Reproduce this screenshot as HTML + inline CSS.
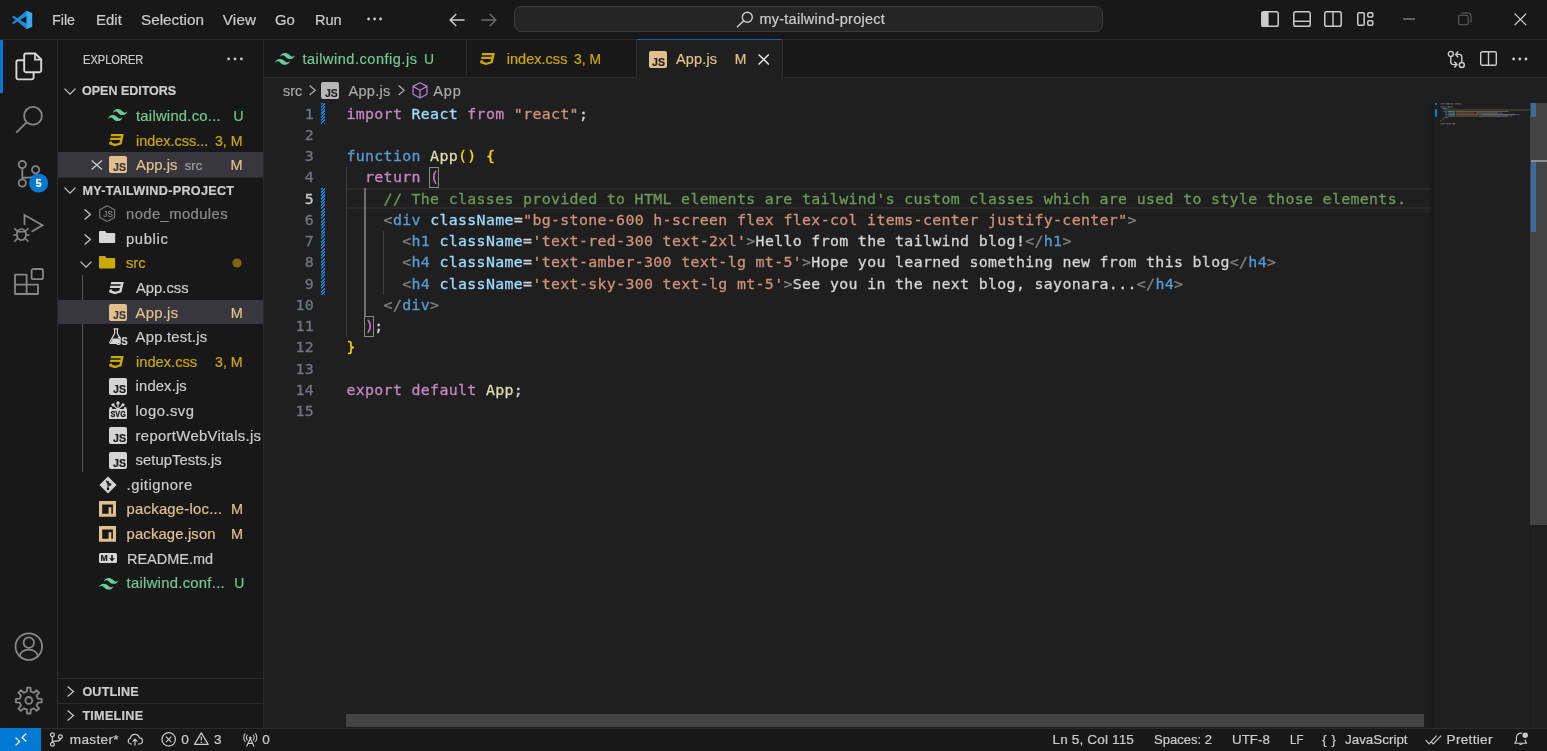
<!DOCTYPE html>
<html lang="en">
<head>
<meta charset="utf-8">
<title>App.js - my-tailwind-project - Visual Studio Code</title>
<style>
*{box-sizing:border-box;margin:0;padding:0}
html,body{width:1547px;height:751px;overflow:hidden;background:#181818}
body{font-family:"Liberation Sans",sans-serif;color:#cccccc;position:relative;font-size:14.5px}
#w{position:absolute;left:0;top:0;width:1547px;height:751px;will-change:transform}
.a{position:absolute}
.t{position:absolute;white-space:pre;line-height:1;-webkit-text-stroke:0.2px}
svg{position:absolute;overflow:visible}
.c{-webkit-text-stroke:0.3px;position:absolute;left:346.4px;white-space:pre;font-family:"DejaVu Sans Mono","Liberation Mono",monospace;font-size:14.9px;letter-spacing:0.332px;line-height:21.29px;height:21.29px;color:#d4d4d4}
.n{-webkit-text-stroke:0.3px;position:absolute;left:264px;width:50px;text-align:right;font-family:"DejaVu Sans Mono","Liberation Mono",monospace;font-size:14.9px;letter-spacing:0.332px;line-height:21.29px;height:21.29px;color:#6e7681}
.k{color:#c586c0}.v{color:#9cdcfe}.s{color:#ce9178}.b{color:#569cd6}.f{color:#dcdcaa}.y{color:#ffd700}.p{color:#da70d6}.m{color:#6a9955}.g{color:#808080}

</style>
</head>
<body>
<div id="w">
<div class="a" style="left:264px;top:78px;width:1283px;height:650px;background:#1f1f1f;"></div>
<div class="a" style="left:0px;top:39px;width:1547px;height:1px;background:#2b2b2b;"></div>
<div class="a" style="left:57px;top:40px;width:1px;height:688px;background:#2b2b2b;"></div>
<div class="a" style="left:263px;top:40px;width:1px;height:688px;background:#2b2b2b;"></div>
<div class="a" style="left:264px;top:77.4px;width:1283px;height:1px;background:#2b2b2b;"></div>
<div class="a" style="left:0px;top:727.5px;width:1547px;height:1px;background:#2b2b2b;"></div>
<svg style="left:11px;top:9.6px" width="22" height="19.8" viewBox="0 0 100 100" preserveAspectRatio="none">
<path d="M71 4 L96 16 V84 L71 96 L29 58 L12 71 L4 66 L21 50 L4 34 L12 29 L29 42 Z M71 30 L42 50 L71 70 Z" fill="#1f8bd8" fill-rule="evenodd"/>
<path d="M71 4 L96 16 V84 L71 96 Z" fill="#3ba6f0"/>
</svg>
<svg style="left:367px;top:17px" width="16" height="4"><circle cx="1.6" cy="2" r="1.4" fill="#ccc"/><circle cx="7.6" cy="2" r="1.4" fill="#ccc"/><circle cx="13.6" cy="2" r="1.4" fill="#ccc"/></svg>
<svg style="left:449px;top:13px" width="16" height="14" viewBox="0 0 16 14"><path d="M7.2 1 L1.2 7 L7.2 13 M1.2 7 H15.6" stroke="#cccccc" stroke-width="1.5" fill="none"/></svg>
<svg style="left:481px;top:13px" width="16" height="14" viewBox="0 0 16 14"><path d="M8.8 1 L14.8 7 L8.8 13 M14.8 7 H0.4" stroke="#6a6a6a" stroke-width="1.5" fill="none"/></svg>
<div class="a" style="left:514px;top:6px;width:589px;height:26px;background:#252525;border:1px solid #3c3c3c;border-radius:7px"></div>
<svg style="left:736px;top:11px" width="18" height="17" viewBox="0 0 18 17"><circle cx="11.3" cy="6.2" r="5" stroke="#cccccc" stroke-width="1.4" fill="none"/><path d="M7.6 9.9 L1 16.2" stroke="#cccccc" stroke-width="1.5"/></svg>
<svg style="left:1261px;top:11px" width="18" height="16" viewBox="0 0 18 16"><rect x="0.8" y="0.8" width="16.4" height="14.4" rx="1.8" stroke="#cccccc" stroke-width="1.5" fill="none"/><rect x="0.8" y="0.8" width="6.8" height="14.4" fill="#cccccc"/></svg>
<svg style="left:1293px;top:11px" width="18" height="16" viewBox="0 0 18 16"><rect x="0.8" y="0.8" width="16.4" height="14.4" rx="1.8" stroke="#cccccc" stroke-width="1.5" fill="none"/><path d="M1 10.3 H17" stroke="#cccccc" stroke-width="1.4"/></svg>
<svg style="left:1324px;top:11px" width="18" height="16" viewBox="0 0 18 16"><rect x="0.8" y="0.8" width="16.4" height="14.4" rx="1.8" stroke="#cccccc" stroke-width="1.5" fill="none"/><path d="M9 1 V15" stroke="#cccccc" stroke-width="1.4"/></svg>
<svg style="left:1357px;top:11px" width="17" height="16" viewBox="0 0 17 16"><rect x="0.8" y="1.8" width="6.4" height="12.4" rx="1.2" stroke="#cccccc" stroke-width="1.5" fill="none"/><rect x="10.8" y="1.8" width="5" height="4.2" rx="1.2" stroke="#cccccc" stroke-width="1.5" fill="none"/><rect x="10.8" y="9.8" width="5" height="4.4" rx="1.2" stroke="#cccccc" stroke-width="1.5" fill="none"/></svg>
<div class="a" style="left:1402.5px;top:18.3px;width:12.6px;height:1.5px;background:#5f5f5f;"></div>
<svg style="left:1458px;top:12px" width="14" height="14" viewBox="0 0 14 14"><rect x="0.6" y="3.2" width="9.6" height="9.6" rx="1.8" stroke="#5f5f5f" stroke-width="1.1" fill="none"/><path d="M3.2 1 H10 A3 3 0 0 1 13 4 V10.4" stroke="#5f5f5f" stroke-width="1.1" fill="none"/></svg>
<svg style="left:1514px;top:13px" width="13" height="13" viewBox="0 0 13 13"><path d="M0.6 0.6 L12.2 12.2 M12.2 0.6 L0.6 12.2" stroke="#d8d8d8" stroke-width="1.2"/></svg>
<div class="a" style="left:0px;top:40px;width:2.5px;height:53px;background:#0078d4;"></div>
<svg style="left:14px;top:52px" width="30" height="30" viewBox="0 0 30 30">
<path d="M10.2 3.3 A1.8 1.8 0 0 1 12 1.5 H21.2 L27.2 7.5 V18.4 A1.8 1.8 0 0 1 25.4 20.2 H12 A1.8 1.8 0 0 1 10.2 18.4 Z" stroke="#d7d7d7" stroke-width="1.9" fill="none" stroke-linejoin="round"/>
<path d="M21 1.8 V7.7 H27" stroke="#d7d7d7" stroke-width="1.7" fill="none"/>
<path d="M10 8.3 H4.2 A1.8 1.8 0 0 0 2.4 10.1 V25.6 A1.8 1.8 0 0 0 4.2 27.4 H17.8 A1.8 1.8 0 0 0 19.6 25.6 V20.4" stroke="#d7d7d7" stroke-width="1.9" fill="none"/>
</svg>
<svg style="left:14px;top:104px" width="32" height="32" viewBox="0 0 32 32"><circle cx="19" cy="11.8" r="8.9" stroke="#868686" stroke-width="1.8" fill="none"/><path d="M12.6 18.4 L2.2 28.6" stroke="#868686" stroke-width="1.9"/></svg>
<svg style="left:14px;top:157px" width="34" height="36" viewBox="0 0 34 36">
<circle cx="8.3" cy="7.5" r="3.6" stroke="#868686" stroke-width="1.8" fill="none"/>
<circle cx="8.3" cy="26" r="3.6" stroke="#868686" stroke-width="1.8" fill="none"/>
<circle cx="21.6" cy="12.8" r="3.6" stroke="#868686" stroke-width="1.8" fill="none"/>
<path d="M8.3 11.1 V22.4 M21.6 16.4 C21.6 20.6 17 20.6 8.6 20.6" stroke="#868686" stroke-width="1.8" fill="none"/>
<circle cx="24.6" cy="26" r="9.6" fill="#0078d4"/>
</svg>
<svg style="left:12px;top:212px" width="34" height="34" viewBox="0 0 34 34">
<path d="M12.5 13 V3 L30.5 13.2 L19.5 19.8" stroke="#868686" stroke-width="1.8" fill="none" stroke-linejoin="miter"/>
<ellipse cx="9.4" cy="22.6" rx="4.6" ry="5.6" stroke="#868686" stroke-width="1.7" fill="none"/>
<path d="M5.6 19.4 L2.2 16.2 M13.2 19.4 L16.6 16.2 M4.8 23 H1.4 M14 23 H17.4 M5.6 26.4 L2.4 29.6 M13.2 26.4 L16.4 29.6 M5.4 19.8 H13.4" stroke="#868686" stroke-width="1.5" fill="none"/>
</svg>
<svg style="left:13px;top:267px" width="32" height="30" viewBox="0 0 32 30">
<path d="M2 7.6 H13.6 V17.6 H25 V27 H2 Z M2 17.6 H13.6 V27" stroke="#868686" stroke-width="1.8" fill="none" stroke-linejoin="round"/>
<rect x="18.6" y="2" width="11.4" height="10.2" rx="1.8" stroke="#868686" stroke-width="1.8" fill="none"/>
</svg>
<svg style="left:13px;top:631px" width="32" height="32" viewBox="0 0 32 32">
<circle cx="15.8" cy="15.6" r="13.3" stroke="#868686" stroke-width="1.8" fill="none"/>
<circle cx="15.8" cy="11.6" r="5.2" stroke="#868686" stroke-width="1.8" fill="none"/>
<path d="M6.4 25.6 C8 19.6 12 18.6 15.8 18.6 C19.6 18.6 23.6 19.6 25.2 25.6" stroke="#868686" stroke-width="1.8" fill="none"/>
</svg>
<svg style="left:13px;top:685px" width="32" height="32" viewBox="0 0 32 32"><path d="M13.84 6.51 L14.07 2.72 L17.53 2.72 L17.76 6.51 L20.84 7.79 L23.69 5.27 L26.13 7.71 L23.61 10.56 L24.89 13.64 L28.68 13.87 L28.68 17.33 L24.89 17.56 L23.61 20.64 L26.13 23.49 L23.69 25.93 L20.84 23.41 L17.76 24.69 L17.53 28.48 L14.07 28.48 L13.84 24.69 L10.76 23.41 L7.91 25.93 L5.47 23.49 L7.99 20.64 L6.71 17.56 L2.92 17.33 L2.92 13.87 L6.71 13.64 L7.99 10.56 L5.47 7.71 L7.91 5.27 L10.76 7.79 Z" stroke="#868686" stroke-width="1.8" fill="none" stroke-linejoin="round"/><circle cx="15.8" cy="15.4" r="3.4" stroke="#868686" stroke-width="1.8" fill="none"/></svg>
<svg style="left:227px;top:57px" width="17" height="4"><circle cx="1.6" cy="1.9" r="1.4" fill="#ccc"/><circle cx="8" cy="1.9" r="1.4" fill="#ccc"/><circle cx="14.4" cy="1.9" r="1.4" fill="#ccc"/></svg>
<svg style="left:64.2px;top:87.9px" width="12" height="7.2" viewBox="0 0 12 7.2"><path d="M0.5 0.6 L6.0 6.2 L11.5 0.6" stroke="#c5c5c5" stroke-width="1.3" fill="none"/></svg>
<svg style="left:108.3px;top:109.0px" width="19.6" height="12.1" viewBox="0 4.8 24 14.4" preserveAspectRatio="none"><path d="M12.001,4.8c-3.2,0-5.2,1.6-6,4.8c1.2-1.6,2.6-2.2,4.2-1.8c0.913,0.228,1.565,0.89,2.288,1.624C13.666,10.618,15.027,12,18.001,12c3.2,0,5.2-1.6,6-4.8c-1.2,1.6-2.6,2.2-4.2,1.8c-0.913-0.228-1.565-0.89-2.288-1.624C16.337,6.182,14.976,4.8,12.001,4.8z M6.001,12c-3.2,0-5.2,1.6-6,4.8c1.2-1.6,2.6-2.2,4.2-1.8c0.913,0.228,1.565,0.89,2.288,1.624c1.177,1.194,2.538,2.576,5.512,2.576c3.2,0,5.2-1.6,6-4.8c-1.2,1.6-2.6,2.2-4.2,1.8c-0.913-0.228-1.565-0.89-2.288-1.624C10.337,13.382,8.976,12,6.001,12z" fill="#66cc9c"/></svg>
<svg style="left:108.8px;top:133.9px" width="14.8" height="12.3" viewBox="2.06 3 19.88 18" preserveAspectRatio="none"><path d="M5,3L4.35,6.34H17.94L17.5,8.5H3.92L3.26,11.83H16.85L16.09,15.64L10.61,17.45L5.86,15.64L6.19,14H2.85L2.06,18L9.91,21L18.96,18L20.16,11.97L20.4,10.76L21.94,3H5Z" fill="#cca700"/></svg>
<div class="a" style="left:58px;top:152.4px;width:205px;height:24.6px;background:#37373d;"></div>
<svg style="left:91px;top:160px" width="12" height="10" viewBox="0 0 12 10"><path d="M0.6 0.4 L11 9.4 M11 0.4 L0.6 9.4" stroke="#d0d0d0" stroke-width="1.3"/></svg>
<div class="a" style="left:109px;top:156.2px;width:18px;height:16.6px;background:#e2c08d;border-radius:2px"></div>
<div class="a" style="left:58px;top:177px;width:205px;height:1px;background:#2b2b2b;"></div>
<svg style="left:64.2px;top:186.8px" width="12" height="7.2" viewBox="0 0 12 7.2"><path d="M0.5 0.6 L6.0 6.2 L11.5 0.6" stroke="#c5c5c5" stroke-width="1.3" fill="none"/></svg>
<svg style="left:83.6px;top:208.8px" width="7.4" height="11" viewBox="0 0 7.4 11"><path d="M0.6 0.5 L6.4 5.5 L0.6 10.5" stroke="#c5c5c5" stroke-width="1.3" fill="none"/></svg>
<svg style="left:99px;top:205px" width="17" height="17" viewBox="0 0 17 17"><path d="M8.2 0.7 L15.6 4.8 V12.4 L8.2 16.4 L0.8 12.4 V4.8 Z" stroke="#7d7d7d" stroke-width="1.1" fill="none" stroke-linejoin="round"/></svg>
<svg style="left:83.6px;top:233.6px" width="7.4" height="11" viewBox="0 0 7.4 11"><path d="M0.6 0.5 L6.4 5.5 L0.6 10.5" stroke="#c5c5c5" stroke-width="1.3" fill="none"/></svg>
<svg style="left:99px;top:230.9px" width="16.2" height="12.1" viewBox="0 0 16.2 12.1"><path d="M0 1 A1 1 0 0 1 1 0 H6.156 L7.452 1.936 H15.2 A1 1 0 0 1 16.2 2.936 V11.1 A1 1 0 0 1 15.2 12.1 H1 A1 1 0 0 1 0 11.1 Z" fill="#d6d6d6"/></svg>
<svg style="left:79.8px;top:260.8px" width="12" height="7.2" viewBox="0 0 12 7.2"><path d="M0.5 0.6 L6.0 6.2 L11.5 0.6" stroke="#c5c5c5" stroke-width="1.3" fill="none"/></svg>
<svg style="left:99px;top:255.6px" width="16.2" height="12.4" viewBox="0 0 16.2 12.4"><path d="M0 1 A1 1 0 0 1 1 0 H6.156 L7.452 1.9840000000000002 H15.2 A1 1 0 0 1 16.2 2.984 V11.4 A1 1 0 0 1 15.2 12.4 H1 A1 1 0 0 1 0 11.4 Z" fill="#cca700"/></svg>
<svg style="left:232px;top:258.4px" width="10" height="10"><circle cx="5" cy="5" r="4.6" fill="#80690a"/></svg>
<div class="a" style="left:82px;top:275.4px;width:1px;height:196.8px;background:#585858;"></div>
<svg style="left:109px;top:282px" width="14.7" height="12.2" viewBox="2.06 3 19.88 18" preserveAspectRatio="none"><path d="M5,3L4.35,6.34H17.94L17.5,8.5H3.92L3.26,11.83H16.85L16.09,15.64L10.61,17.45L5.86,15.64L6.19,14H2.85L2.06,18L9.91,21L18.96,18L20.16,11.97L20.4,10.76L21.94,3H5Z" fill="#d4d4d4"/></svg>
<div class="a" style="left:58px;top:299.8px;width:205px;height:24.6px;background:#37373d;"></div>
<div class="a" style="left:109px;top:304px;width:18px;height:17px;background:#e2c08d;border-radius:2px"></div>
<svg style="left:108.5px;top:328px" width="14" height="17" viewBox="0 0 14 17"><path d="M4.6 0.8 H9.4 M5.6 0.8 V5.6 L0.9 14 Q0.5 15.4 2 15.4 H9 M8.4 0.8 V5.6 L10.6 9.4" stroke="#d4d4d4" stroke-width="1.2" fill="none" stroke-linejoin="round"/><path d="M3.6 10.4 H9.6 L11 13 V15 H1.6 Z" fill="#d4d4d4"/></svg>
<svg style="left:109px;top:355.8px" width="14.7" height="12.2" viewBox="2.06 3 19.88 18" preserveAspectRatio="none"><path d="M5,3L4.35,6.34H17.94L17.5,8.5H3.92L3.26,11.83H16.85L16.09,15.64L10.61,17.45L5.86,15.64L6.19,14H2.85L2.06,18L9.91,21L18.96,18L20.16,11.97L20.4,10.76L21.94,3H5Z" fill="#cca700"/></svg>
<div class="a" style="left:109px;top:377.8px;width:18px;height:17px;background:#d4d4d4;border-radius:2px"></div>
<div class="a" style="left:109px;top:427px;width:18px;height:17px;background:#d4d4d4;border-radius:2px"></div>
<div class="a" style="left:109px;top:451.6px;width:18px;height:17px;background:#d4d4d4;border-radius:2px"></div>
<svg style="left:99px;top:577.6px" width="19.4" height="11.6" viewBox="0 4.8 24 14.4" preserveAspectRatio="none"><path d="M12.001,4.8c-3.2,0-5.2,1.6-6,4.8c1.2-1.6,2.6-2.2,4.2-1.8c0.913,0.228,1.565,0.89,2.288,1.624C13.666,10.618,15.027,12,18.001,12c3.2,0,5.2-1.6,6-4.8c-1.2,1.6-2.6,2.2-4.2,1.8c-0.913-0.228-1.565-0.89-2.288-1.624C16.337,6.182,14.976,4.8,12.001,4.8z M6.001,12c-3.2,0-5.2,1.6-6,4.8c1.2-1.6,2.6-2.2,4.2-1.8c0.913,0.228,1.565,0.89,2.288,1.624c1.177,1.194,2.538,2.576,5.512,2.576c3.2,0,5.2-1.6,6-4.8c-1.2,1.6-2.6,2.2-4.2,1.8c-0.913-0.228-1.565-0.89-2.288-1.624C10.337,13.382,8.976,12,6.001,12z" fill="#66cc9c"/></svg>
<div class="a" style="left:58px;top:678px;width:205px;height:1px;background:#2b2b2b;"></div>
<div class="a" style="left:58px;top:702.6px;width:205px;height:1px;background:#2b2b2b;"></div>
<svg style="left:67.4px;top:685.6px" width="7.4" height="11" viewBox="0 0 7.4 11"><path d="M0.6 0.5 L6.4 5.5 L0.6 10.5" stroke="#c5c5c5" stroke-width="1.3" fill="none"/></svg>
<svg style="left:67.4px;top:710.2px" width="7.4" height="11" viewBox="0 0 7.4 11"><path d="M0.6 0.5 L6.4 5.5 L0.6 10.5" stroke="#c5c5c5" stroke-width="1.3" fill="none"/></svg>
<div class="a" style="left:109px;top:409.3px;width:18px;height:9.6px;background:#d4d4d4;border-radius:1px"></div>
<svg style="left:109px;top:401px" width="18" height="9" viewBox="0 0 18 9">
<path d="M9 8.6 V2.4 M9 8.6 L4.2 4 M9 8.6 L13.8 4 M9 8.6 H2.2 M9 8.6 H15.8" stroke="#d4d4d4" stroke-width="1.1" fill="none"/>
<circle cx="9" cy="2" r="1.7" fill="#d4d4d4"/><circle cx="4" cy="3.8" r="1.6" fill="#d4d4d4"/><circle cx="14" cy="3.8" r="1.6" fill="#d4d4d4"/><circle cx="1.8" cy="7.4" r="1.4" fill="#d4d4d4"/><circle cx="16.2" cy="7.4" r="1.4" fill="#d4d4d4"/>
</svg>
<svg style="left:98.6px;top:475.6px" width="18" height="18" viewBox="0 0 18 18">
<path d="M9 0.4 L17.6 9 L9 17.6 L0.4 9 Z" fill="#d4d4d4"/>
<path d="M7 4.6 L10.6 8.2 M9 6.4 V13" stroke="#181818" stroke-width="1.2" fill="none"/>
<circle cx="9" cy="13" r="1.3" fill="#181818"/><circle cx="11" cy="8.6" r="1.3" fill="#181818"/><circle cx="8.8" cy="6.2" r="1.2" fill="#181818"/>
</svg>
<svg style="left:99px;top:501px" width="17" height="15.8" viewBox="0 0 17 15.8"><path d="M0 0 H17 V15.8 H0 Z M3.2 3.4 V12.8 H9.6 V6.2 H12.3 V12.8 H13.9 V3.4 Z" fill="#e2c08d" fill-rule="evenodd"/></svg>
<svg style="left:99px;top:525.5px" width="17" height="15.8" viewBox="0 0 17 15.8"><path d="M0 0 H17 V15.8 H0 Z M3.2 3.4 V12.8 H9.6 V6.2 H12.3 V12.8 H13.9 V3.4 Z" fill="#e2c08d" fill-rule="evenodd"/></svg>
<div class="a" style="left:99px;top:552.5px;width:18px;height:10.4px;background:#d4d4d4;border-radius:1.5px"></div>
<svg style="left:109.4px;top:554.6px" width="6" height="7" viewBox="0 0 6 7"><path d="M3 0 V4" stroke="#181818" stroke-width="1.6"/><path d="M0.2 3.2 H5.8 L3 6.4 Z" fill="#181818"/></svg>
<div class="a" style="left:466px;top:40px;width:1px;height:37px;background:#2b2b2b;"></div>
<div class="a" style="left:636px;top:40px;width:1px;height:37px;background:#2b2b2b;"></div>
<div class="a" style="left:637px;top:40px;width:144.8px;height:38.6px;background:#1f1f1f;"></div>
<div class="a" style="left:637px;top:39px;width:144.8px;height:1.1px;background:#0b62a8;"></div>
<div class="a" style="left:781.8px;top:40px;width:1px;height:37.4px;background:#2b2b2b;"></div>
<svg style="left:275.2px;top:52.8px" width="20" height="11.8" viewBox="0 4.8 24 14.4" preserveAspectRatio="none"><path d="M12.001,4.8c-3.2,0-5.2,1.6-6,4.8c1.2-1.6,2.6-2.2,4.2-1.8c0.913,0.228,1.565,0.89,2.288,1.624C13.666,10.618,15.027,12,18.001,12c3.2,0,5.2-1.6,6-4.8c-1.2,1.6-2.6,2.2-4.2,1.8c-0.913-0.228-1.565-0.89-2.288-1.624C16.337,6.182,14.976,4.8,12.001,4.8z M6.001,12c-3.2,0-5.2,1.6-6,4.8c1.2-1.6,2.6-2.2,4.2-1.8c0.913,0.228,1.565,0.89,2.288,1.624c1.177,1.194,2.538,2.576,5.512,2.576c3.2,0,5.2-1.6,6-4.8c-1.2,1.6-2.6,2.2-4.2,1.8c-0.913-0.228-1.565-0.89-2.288-1.624C10.337,13.382,8.976,12,6.001,12z" fill="#66cc9c"/></svg>
<svg style="left:479.8px;top:53.1px" width="14.9" height="12" viewBox="2.06 3 19.88 18" preserveAspectRatio="none"><path d="M5,3L4.35,6.34H17.94L17.5,8.5H3.92L3.26,11.83H16.85L16.09,15.64L10.61,17.45L5.86,15.64L6.19,14H2.85L2.06,18L9.91,21L18.96,18L20.16,11.97L20.4,10.76L21.94,3H5Z" fill="#cca700"/></svg>
<div class="a" style="left:648.6px;top:51px;width:18px;height:17px;background:#e2c08d;border-radius:2px"></div>
<svg style="left:758.4px;top:53.8px" width="12" height="11" viewBox="0 0 12 11"><path d="M0.6 0.4 L10.8 10.4 M10.8 0.4 L0.6 10.4" stroke="#f0f0f0" stroke-width="1.4"/></svg>
<svg style="left:1447px;top:50px" width="19" height="19" viewBox="0 0 19 19">
<circle cx="3.8" cy="3.9" r="2.5" stroke="#cccccc" stroke-width="1.4" fill="none"/>
<circle cx="14.8" cy="15" r="2.5" stroke="#cccccc" stroke-width="1.4" fill="none"/>
<path d="M3.8 6.4 V12 A2.6 2.6 0 0 0 6.4 14.6 H9.6 M7.4 11.8 L10 14.6 L7.4 17.4" stroke="#cccccc" stroke-width="1.4" fill="none"/>
<path d="M14.8 12.5 V7 A2.6 2.6 0 0 0 12.2 4.4 H9 M11.2 7.2 L8.6 4.4 L11.2 1.6" stroke="#cccccc" stroke-width="1.4" fill="none"/>
</svg>
<svg style="left:1480px;top:51px" width="17" height="15" viewBox="0 0 17 15"><rect x="0.7" y="0.7" width="15.6" height="13.6" rx="1.6" stroke="#cccccc" stroke-width="1.4" fill="none"/><path d="M8.5 1 V14" stroke="#cccccc" stroke-width="1.4"/></svg>
<svg style="left:1511.5px;top:57px" width="17" height="4"><circle cx="1.6" cy="2" r="1.4" fill="#ccc"/><circle cx="7.8" cy="2" r="1.4" fill="#ccc"/><circle cx="14" cy="2" r="1.4" fill="#ccc"/></svg>
<svg style="left:309px;top:85.2px" width="7.2" height="10.6" viewBox="0 0 7.2 10.6"><path d="M0.6 0.5 L6.2 5.3 L0.6 10.1" stroke="#a9a9a9" stroke-width="1.3" fill="none"/></svg>
<div class="a" style="left:321.4px;top:82.2px;width:17.8px;height:16.4px;background:#b8b8b8;border-radius:2px"></div>
<svg style="left:397.8px;top:85.2px" width="7.2" height="10.6" viewBox="0 0 7.2 10.6"><path d="M0.6 0.5 L6.2 5.3 L0.6 10.1" stroke="#a9a9a9" stroke-width="1.3" fill="none"/></svg>
<svg style="left:412px;top:82px" width="16" height="17" viewBox="0 0 16 17"><path d="M8 0.8 L15 4.4 V12.2 L8 16 L1 12.2 V4.4 Z M1 4.4 L8 8.2 L15 4.4 M8 8.2 V16" stroke="#b180d7" stroke-width="1.2" fill="none" stroke-linejoin="round"/></svg>
<div class="a" style="left:346.6px;top:188px;width:1084px;height:21.4px;background:transparent;border-top:2px solid #292929;border-bottom:2px solid #292929"></div>
<div class="a" style="left:345.8px;top:166.87px;width:1.2px;height:170.32px;background:#3d3d3d;"></div>
<div class="a" style="left:364.4px;top:188.16px;width:1.2px;height:127.74px;background:#707070;"></div>
<div class="a" style="left:383px;top:230.74px;width:1.2px;height:63.87px;background:#3d3d3d;"></div>
<div class="a" style="left:429.40999999999997px;top:167.27px;width:9.889999999999999px;height:20.49px;background:rgba(0,100,0,0.1);border:1px solid #888888"></div>
<div class="a" style="left:364.37999999999994px;top:316.29999999999995px;width:9.889999999999999px;height:20.49px;background:rgba(0,100,0,0.1);border:1px solid #888888"></div>
<div class="a" style="left:320.8px;top:103.0px;width:4.3px;height:21.29px;background:transparent;background:repeating-linear-gradient(135deg,#0b84e3 0,#0b84e3 1.45px,transparent 1.45px,transparent 2.35px)"></div>
<div class="a" style="left:320.8px;top:188.16px;width:4.3px;height:106.44999999999999px;background:transparent;background:repeating-linear-gradient(135deg,#0b84e3 0,#0b84e3 1.45px,transparent 1.45px,transparent 2.35px)"></div>
<div class="n" style="top:103.55px;color:#6e7681">1</div><div class="c" style="top:103.55px"><span class="k">import</span> <span class="v">React</span> <span class="k">from</span> <span class="s">"react"</span>;</div>
<div class="n" style="top:124.81px;color:#6e7681">2</div>
<div class="n" style="top:146.07px;color:#6e7681">3</div><div class="c" style="top:146.07px"><span class="b">function</span> <span class="f">App</span><span class="y">()</span> <span class="y">{</span></div>
<div class="n" style="top:167.33px;color:#6e7681">4</div><div class="c" style="top:167.33px">  <span class="k">return</span> <span class="p">(</span></div>
<div class="n" style="top:188.59px;color:#cccccc">5</div><div class="c" style="top:188.59px">    <span class="m">// The classes provided to HTML elements are tailwind's custom classes which are used to style those elements.</span></div>
<div class="n" style="top:209.85px;color:#6e7681">6</div><div class="c" style="top:209.85px">    <span class="g">&lt;</span><span class="b">div</span> <span class="v">className</span>=<span class="s">"bg-stone-600 h-screen flex flex-col items-center justify-center"</span><span class="g">&gt;</span></div>
<div class="n" style="top:231.11px;color:#6e7681">7</div><div class="c" style="top:231.11px">      <span class="g">&lt;</span><span class="b">h1</span> <span class="v">className</span>=<span class="s">'text-red-300 text-2xl'</span><span class="g">&gt;</span>Hello from the tailwind blog!<span class="g">&lt;/</span><span class="b">h1</span><span class="g">&gt;</span></div>
<div class="n" style="top:252.37px;color:#6e7681">8</div><div class="c" style="top:252.37px">      <span class="g">&lt;</span><span class="b">h4</span> <span class="v">className</span>=<span class="s">'text-amber-300 text-lg mt-5'</span><span class="g">&gt;</span>Hope you learned something new from this blog<span class="g">&lt;/</span><span class="b">h4</span><span class="g">&gt;</span></div>
<div class="n" style="top:273.63px;color:#6e7681">9</div><div class="c" style="top:273.63px">      <span class="g">&lt;</span><span class="b">h4</span> <span class="v">className</span>=<span class="s">'text-sky-300 text-lg mt-5'</span><span class="g">&gt;</span>See you in the next blog, sayonara...<span class="g">&lt;/</span><span class="b">h4</span><span class="g">&gt;</span></div>
<div class="n" style="top:294.89px;color:#6e7681">10</div><div class="c" style="top:294.89px">    <span class="g">&lt;/</span><span class="b">div</span><span class="g">&gt;</span></div>
<div class="n" style="top:316.15px;color:#6e7681">11</div><div class="c" style="top:316.15px">  <span class="p">)</span>;</div>
<div class="n" style="top:337.41px;color:#6e7681">12</div><div class="c" style="top:337.41px"><span class="y">}</span></div>
<div class="n" style="top:358.67px;color:#6e7681">13</div>
<div class="n" style="top:379.93px;color:#6e7681">14</div><div class="c" style="top:379.93px"><span class="k">export</span> <span class="k">default</span> <span class="f">App</span>;</div>
<div class="n" style="top:401.19px;color:#6e7681">15</div>
<div class="a" style="left:1428px;top:103px;width:6px;height:624px;background:linear-gradient(90deg,rgba(0,0,0,0),rgba(0,0,0,0.28))"></div>
<div class="a" style="left:1435px;top:103px;width:2px;height:1.6px;background:#0078d4;"></div>
<div class="a" style="left:1435px;top:109.2px;width:2px;height:7.4px;background:#0078d4;"></div>
<svg style="left:0;top:0" width="1547" height="751" viewBox="0 0 1547 751" opacity="0.45"><rect x="1440.4" y="103.30" width="4.7" height="1.1" fill="#c586c0"/><rect x="1445.9" y="103.30" width="3.9" height="1.1" fill="#9cdcfe"/><rect x="1450.6" y="103.30" width="3.1" height="1.1" fill="#c586c0"/><rect x="1454.5" y="103.30" width="5.5" height="1.1" fill="#ce9178"/><rect x="1460.0" y="103.30" width="0.8" height="1.1" fill="#ccc"/><rect x="1440.4" y="106.37" width="6.3" height="1.1" fill="#569cd6"/><rect x="1447.5" y="106.37" width="2.4" height="1.1" fill="#dcdcaa"/><rect x="1449.8" y="106.37" width="1.6" height="1.1" fill="#ffd700"/><rect x="1452.2" y="106.37" width="0.8" height="1.1" fill="#ffd700"/><rect x="1442.0" y="107.91" width="4.7" height="1.1" fill="#c586c0"/><rect x="1447.5" y="107.91" width="0.8" height="1.1" fill="#da70d6"/><rect x="1443.5" y="109.44" width="86.4" height="1.1" fill="#6a9955"/><rect x="1443.5" y="110.97" width="3.1" height="1.1" fill="#569cd6"/><rect x="1447.5" y="110.97" width="7.1" height="1.1" fill="#9cdcfe"/><rect x="1455.3" y="110.97" width="52.6" height="1.1" fill="#ce9178"/><rect x="1507.9" y="110.97" width="0.8" height="1.1" fill="#808080"/><rect x="1445.1" y="112.51" width="2.4" height="1.1" fill="#569cd6"/><rect x="1448.2" y="112.51" width="7.1" height="1.1" fill="#9cdcfe"/><rect x="1456.1" y="112.51" width="18.8" height="1.1" fill="#ce9178"/><rect x="1475.7" y="112.51" width="22.8" height="1.1" fill="#cccccc"/><rect x="1499.3" y="112.51" width="3.1" height="1.1" fill="#569cd6"/><rect x="1445.1" y="114.05" width="2.4" height="1.1" fill="#569cd6"/><rect x="1448.2" y="114.05" width="7.1" height="1.1" fill="#9cdcfe"/><rect x="1456.1" y="114.05" width="23.6" height="1.1" fill="#ce9178"/><rect x="1480.4" y="114.05" width="35.3" height="1.1" fill="#cccccc"/><rect x="1516.5" y="114.05" width="3.1" height="1.1" fill="#569cd6"/><rect x="1445.1" y="115.58" width="2.4" height="1.1" fill="#569cd6"/><rect x="1448.2" y="115.58" width="7.1" height="1.1" fill="#9cdcfe"/><rect x="1456.1" y="115.58" width="22.0" height="1.1" fill="#ce9178"/><rect x="1478.9" y="115.58" width="29.0" height="1.1" fill="#cccccc"/><rect x="1508.7" y="115.58" width="3.1" height="1.1" fill="#569cd6"/><rect x="1443.5" y="117.11" width="4.7" height="1.1" fill="#569cd6"/><rect x="1442.0" y="118.65" width="0.8" height="1.1" fill="#da70d6"/><rect x="1442.8" y="118.65" width="0.8" height="1.1" fill="#ccc"/><rect x="1440.4" y="120.19" width="0.8" height="1.1" fill="#ffd700"/><rect x="1440.4" y="123.25" width="4.7" height="1.1" fill="#c586c0"/><rect x="1445.9" y="123.25" width="5.5" height="1.1" fill="#c586c0"/><rect x="1452.2" y="123.25" width="2.4" height="1.1" fill="#dcdcaa"/><rect x="1454.5" y="123.25" width="0.8" height="1.1" fill="#ccc"/></svg>
<div class="a" style="left:1530px;top:524.6px;width:1px;height:202.4px;background:#1a1a1a;"></div>
<div class="a" style="left:1530.2px;top:103px;width:16.8px;height:421.6px;background:#434343;"></div>
<div class="a" style="left:1531px;top:103px;width:5px;height:14px;background:#3b6d9c;"></div>
<div class="a" style="left:1531px;top:160px;width:16px;height:2px;background:#8e8e8e;"></div>
<div class="a" style="left:1531px;top:162px;width:5px;height:70px;background:#3b6d9c;"></div>
<div class="a" style="left:346px;top:714px;width:1078px;height:13px;background:#434343;"></div>
<div class="a" style="left:0px;top:728.2px;width:41.1px;height:23px;background:#0078d4;"></div>
<svg style="left:15px;top:733px" width="12" height="13" viewBox="0 0 12 13"><path d="M0.6 4.6 L4.6 8.6 L0.6 12.4 M11.2 0.6 L7.2 4.4 L11.2 8.4" stroke="#ffffff" stroke-width="1.3" fill="none"/></svg>
<svg style="left:49px;top:732px" width="15" height="15" viewBox="0 0 15 15">
<circle cx="3.4" cy="2.8" r="1.9" stroke="#cccccc" stroke-width="1.2" fill="none"/>
<circle cx="3.4" cy="12.2" r="1.9" stroke="#cccccc" stroke-width="1.2" fill="none"/>
<circle cx="11.4" cy="4.8" r="1.9" stroke="#cccccc" stroke-width="1.2" fill="none"/>
<path d="M3.4 4.7 V10.3 M11.4 6.7 C11.4 9 9 9.2 3.6 9.4" stroke="#cccccc" stroke-width="1.2" fill="none"/>
</svg>
<svg style="left:127px;top:734px" width="16" height="12" viewBox="0 0 16 12">
<path d="M5 10 H3.6 A3 3 0 0 1 3.4 4.2 A4.6 4.6 0 0 1 12.4 3.8 A3.1 3.1 0 0 1 12.4 10 H11" stroke="#cccccc" stroke-width="1.2" fill="none"/>
<path d="M8 11.6 V5.4 M5.6 7.6 L8 5.2 L10.4 7.6" stroke="#cccccc" stroke-width="1.2" fill="none"/>
</svg>
<svg style="left:160.6px;top:732px" width="16" height="15" viewBox="0 0 16 15"><circle cx="7.7" cy="7.4" r="6.7" stroke="#cccccc" stroke-width="1.2" fill="none"/><path d="M5 4.7 L10.4 10.1 M10.4 4.7 L5 10.1" stroke="#cccccc" stroke-width="1.2"/></svg>
<svg style="left:194px;top:732.4px" width="15" height="13" viewBox="0 0 15 13"><path d="M7.3 0.9 L14.2 12.4 H0.5 Z" stroke="#cccccc" stroke-width="1.2" fill="none" stroke-linejoin="round"/><path d="M7.3 4.6 V8.6 M7.3 9.8 V11" stroke="#cccccc" stroke-width="1.2"/></svg>
<svg style="left:242.6px;top:732.6px" width="15" height="14" viewBox="0 0 15 14">
<path d="M7.3 5.2 L3.6 13.6 M7.3 5.2 L11 13.6 M5 10.4 H9.6" stroke="#cccccc" stroke-width="1.15" fill="none"/>
<circle cx="7.3" cy="4.6" r="1.2" fill="#cccccc"/>
<path d="M4.6 1.8 A3.8 3.8 0 0 0 4.6 7.4 M10 1.8 A3.8 3.8 0 0 1 10 7.4 M2.4 0.4 A6.2 6.2 0 0 0 2.4 8.8 M12.2 0.4 A6.2 6.2 0 0 1 12.2 8.8" stroke="#cccccc" stroke-width="1.1" fill="none"/>
</svg>
<svg style="left:1424.6px;top:734.6px" width="17" height="10" viewBox="0 0 17 10"><path d="M0.6 5.2 L4.2 9 L11.6 0.6 M6.6 7.2 L8.2 9 L16.2 0.6" stroke="#cccccc" stroke-width="1.15" fill="none"/></svg>
<svg style="left:1513.6px;top:732.4px" width="15" height="14" viewBox="0 0 15 14">
<path d="M8.2 1.4 A4.4 4.4 0 0 0 2.4 5.6 V8.6 L0.8 11.2 H12.6 L11.2 8.8 V7.4" stroke="#cccccc" stroke-width="1.15" fill="none" stroke-linejoin="round"/>
<path d="M5.2 11.4 A1.7 1.7 0 0 0 8.4 11.4" stroke="#cccccc" stroke-width="1.1" fill="none"/>
<circle cx="11.2" cy="3.3" r="2.7" fill="#cccccc"/>
</svg>
<span class="t" style="left:52.30px;top:12.00px;font-size:15.3px;color:#cccccc;transform:scaleX(0.9369);transform-origin:0 0;">File</span>
<span class="t" style="left:95.60px;top:12.00px;font-size:15.3px;color:#cccccc;transform:scaleX(0.9788);transform-origin:0 0;">Edit</span>
<span class="t" style="left:140.80px;top:12.00px;font-size:15.3px;color:#cccccc;transform:scaleX(0.9994);transform-origin:0 0;">Selection</span>
<span class="t" style="left:222.80px;top:12.00px;font-size:15.3px;color:#cccccc;letter-spacing:0.146px;">View</span>
<span class="t" style="left:275.40px;top:12.00px;font-size:15.3px;color:#cccccc;transform:scaleX(0.9752);transform-origin:0 0;">Go</span>
<span class="t" style="left:315.30px;top:12.00px;font-size:15.3px;color:#cccccc;transform:scaleX(0.9514);transform-origin:0 0;">Run</span>
<span class="t" style="left:759.40px;top:11.80px;font-size:14.5px;color:#cccccc;letter-spacing:0.255px;">my-tailwind-project</span>
<span class="t" style="left:35.40px;top:177.90px;font-size:11px;color:#ffffff;font-weight:700;">5</span>
<span class="t" style="left:82.60px;top:54.00px;font-size:12.6px;color:#cccccc;transform:scaleX(0.8791);transform-origin:0 0;">EXPLORER</span>
<span class="t" style="left:82.20px;top:85.40px;font-size:12.6px;color:#cccccc;font-weight:700;transform:scaleX(0.9921);transform-origin:0 0;">OPEN EDITORS</span>
<span class="t" style="left:136.00px;top:109.10px;font-size:14.8px;color:#73c991;letter-spacing:0.250px;">tailwind.co...</span>
<span class="t" style="left:233.60px;top:110.10px;font-size:13.9px;color:#73c991;">U</span>
<span class="t" style="left:136.00px;top:133.60px;font-size:14.8px;color:#cca700;transform:scaleX(0.9768);transform-origin:0 0;">index.css...</span>
<span class="t" style="left:215.30px;top:133.60px;font-size:14.5px;color:#cca700;transform:scaleX(0.9751);transform-origin:0 0;">3, M</span>
<span class="t" style="left:112.87px;top:162.06px;font-size:10.956000000000001px;color:#37373d;font-weight:700;transform:scaleX(0.9678);transform-origin:0 0;">JS</span>
<span class="t" style="left:136.00px;top:158.20px;font-size:14.8px;color:#e2c08d;letter-spacing:0.068px;">App.js</span>
<span class="t" style="left:184.80px;top:159.20px;font-size:13px;color:#a0a0a0;letter-spacing:0.062px;">src</span>
<span class="t" style="left:230.60px;top:158.20px;font-size:14.5px;color:#e2c08d;">M</span>
<span class="t" style="left:82.40px;top:185.00px;font-size:12.6px;color:#cccccc;font-weight:700;letter-spacing:0.314px;">MY-TAILWIND-PROJECT</span>
<span class="t" style="left:103.30px;top:211.20px;font-size:8.2px;color:#858585;letter-spacing:0.225px;">JS</span>
<span class="t" style="left:126.00px;top:207.20px;font-size:14.8px;color:#8c8c8c;letter-spacing:0.411px;">node_modules</span>
<span class="t" style="left:126.00px;top:231.80px;font-size:14.8px;color:#cccccc;letter-spacing:0.641px;">public</span>
<span class="t" style="left:126.00px;top:256.40px;font-size:14.8px;color:#cca700;transform:scaleX(0.9932);transform-origin:0 0;">src</span>
<span class="t" style="left:135.60px;top:280.80px;font-size:14.8px;color:#cccccc;transform:scaleX(0.9992);transform-origin:0 0;">App.css</span>
<span class="t" style="left:112.87px;top:310.21px;font-size:11.22px;color:#37373d;font-weight:700;transform:scaleX(0.9436);transform-origin:0 0;">JS</span>
<span class="t" style="left:135.60px;top:305.60px;font-size:14.8px;color:#e2c08d;letter-spacing:0.268px;">App.js</span>
<span class="t" style="left:230.80px;top:305.60px;font-size:14.5px;color:#e2c08d;">M</span>
<span class="t" style="left:116.40px;top:335.60px;font-size:11px;color:#d4d4d4;font-weight:700;transform:scaleX(0.8761);transform-origin:0 0;">JS</span>
<span class="t" style="left:135.60px;top:330.20px;font-size:14.8px;color:#cccccc;letter-spacing:0.239px;">App.test.js</span>
<span class="t" style="left:135.60px;top:354.80px;font-size:14.8px;color:#cca700;transform:scaleX(0.9921);transform-origin:0 0;">index.css</span>
<span class="t" style="left:215.40px;top:354.80px;font-size:14.5px;color:#cca700;transform:scaleX(0.9786);transform-origin:0 0;">3, M</span>
<span class="t" style="left:112.87px;top:384.01px;font-size:11.22px;color:#181818;font-weight:700;transform:scaleX(0.9436);transform-origin:0 0;">JS</span>
<span class="t" style="left:135.60px;top:379.40px;font-size:14.8px;color:#cccccc;letter-spacing:0.137px;">index.js</span>
<span class="t" style="left:135.60px;top:404.00px;font-size:14.8px;color:#cccccc;letter-spacing:0.463px;">logo.svg</span>
<span class="t" style="left:112.87px;top:433.21px;font-size:11.22px;color:#181818;font-weight:700;transform:scaleX(0.9436);transform-origin:0 0;">JS</span>
<span class="t" style="left:135.60px;top:428.60px;font-size:14.8px;color:#cccccc;letter-spacing:0.347px;">reportWebVitals.js</span>
<span class="t" style="left:112.87px;top:457.81px;font-size:11.22px;color:#181818;font-weight:700;transform:scaleX(0.9436);transform-origin:0 0;">JS</span>
<span class="t" style="left:135.60px;top:453.20px;font-size:14.8px;color:#cccccc;letter-spacing:0.054px;">setupTests.js</span>
<span class="t" style="left:126.60px;top:477.80px;font-size:14.8px;color:#cccccc;letter-spacing:0.539px;">.gitignore</span>
<span class="t" style="left:126.60px;top:502.40px;font-size:14.8px;color:#e2c08d;letter-spacing:0.257px;">package-loc...</span>
<span class="t" style="left:231.00px;top:502.40px;font-size:14.5px;color:#e2c08d;transform:scaleX(0.9922);transform-origin:0 0;">M</span>
<span class="t" style="left:126.60px;top:527.00px;font-size:14.8px;color:#e2c08d;letter-spacing:0.156px;">package.json</span>
<span class="t" style="left:231.00px;top:527.00px;font-size:14.5px;color:#e2c08d;transform:scaleX(0.9922);transform-origin:0 0;">M</span>
<span class="t" style="left:126.60px;top:551.60px;font-size:14.8px;color:#cccccc;transform:scaleX(0.9774);transform-origin:0 0;">README.md</span>
<span class="t" style="left:126.60px;top:576.20px;font-size:14.8px;color:#73c991;letter-spacing:0.286px;">tailwind.conf...</span>
<span class="t" style="left:234.20px;top:577.20px;font-size:13.9px;color:#73c991;">U</span>
<span class="t" style="left:82.40px;top:686.00px;font-size:12.6px;color:#cccccc;font-weight:700;letter-spacing:0.172px;">OUTLINE</span>
<span class="t" style="left:82.40px;top:710.40px;font-size:12.6px;color:#cccccc;font-weight:700;letter-spacing:0.269px;">TIMELINE</span>
<span class="t" style="left:110.40px;top:411.08px;font-size:7.2px;color:#181818;font-weight:700;letter-spacing:0.085px;transform:scaleY(1.32);transform-origin:0 85%;">SVG</span>
<span class="t" style="left:100.60px;top:554.00px;font-size:8.6px;color:#181818;font-weight:700;">M</span>
<span class="t" style="left:302.40px;top:52.40px;font-size:14.5px;color:#73c991;letter-spacing:0.527px;">tailwind.config.js</span>
<span class="t" style="left:424.00px;top:53.40px;font-size:13.9px;color:#73c991;">U</span>
<span class="t" style="left:506.80px;top:52.40px;font-size:14.5px;color:#cca700;letter-spacing:0.017px;">index.css</span>
<span class="t" style="left:574.40px;top:53.40px;font-size:13.9px;color:#cca700;transform:scaleX(0.9994);transform-origin:0 0;">3, M</span>
<span class="t" style="left:652.47px;top:57.22px;font-size:11.22px;color:#1f1f1f;font-weight:700;transform:scaleX(0.9436);transform-origin:0 0;">JS</span>
<span class="t" style="left:676.00px;top:52.40px;font-size:14.5px;color:#e2c08d;letter-spacing:0.161px;">App.js</span>
<span class="t" style="left:734.80px;top:53.40px;font-size:13.9px;color:#e2c08d;">M</span>
<span class="t" style="left:282.70px;top:83.60px;font-size:14.5px;color:#a9a9a9;transform:scaleX(0.9874);transform-origin:0 0;">src</span>
<span class="t" style="left:325.23px;top:87.88px;font-size:10.824px;color:#1f1f1f;font-weight:700;transform:scaleX(0.9684);transform-origin:0 0;">JS</span>
<span class="t" style="left:348.60px;top:83.60px;font-size:14.5px;color:#a9a9a9;letter-spacing:0.270px;">App.js</span>
<span class="t" style="left:433.20px;top:83.60px;font-size:14.5px;color:#a9a9a9;letter-spacing:0.875px;">App</span>
<span class="t" style="left:69.80px;top:733.20px;font-size:13.6px;color:#cccccc;letter-spacing:0.332px;">master*</span>
<span class="t" style="left:181.30px;top:733.20px;font-size:13.6px;color:#cccccc;">0</span>
<span class="t" style="left:213.90px;top:733.20px;font-size:13.6px;color:#cccccc;">3</span>
<span class="t" style="left:262.20px;top:733.20px;font-size:13.6px;color:#cccccc;">0</span>
<span class="t" style="left:1052.60px;top:733.20px;font-size:13.6px;color:#cccccc;letter-spacing:0.123px;">Ln 5, Col 115</span>
<span class="t" style="left:1154.30px;top:733.20px;font-size:13.6px;color:#cccccc;transform:scaleX(0.9608);transform-origin:0 0;">Spaces: 2</span>
<span class="t" style="left:1232.40px;top:733.20px;font-size:13.6px;color:#cccccc;transform:scaleX(0.9814);transform-origin:0 0;">UTF-8</span>
<span class="t" style="left:1290.40px;top:734.20px;font-size:12.6px;color:#cccccc;transform:scaleX(0.9114);transform-origin:0 0;">LF</span>
<span class="t" style="left:1322.20px;top:733.00px;font-size:13px;color:#cccccc;letter-spacing:0.681px;">{ }</span>
<span class="t" style="left:1345.20px;top:733.20px;font-size:13.6px;color:#cccccc;transform:scaleX(0.9863);transform-origin:0 0;">JavaScript</span>
<span class="t" style="left:1446.60px;top:733.20px;font-size:13.6px;color:#cccccc;letter-spacing:0.290px;">Prettier</span>
</div>
</body>
</html>
